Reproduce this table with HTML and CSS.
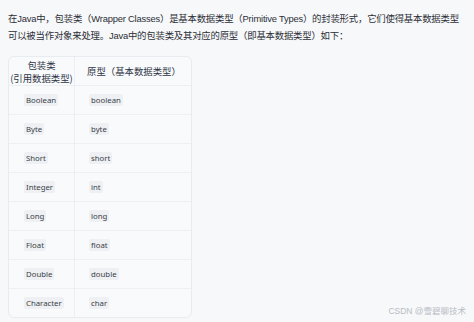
FILE: index.html
```html
<!DOCTYPE html>
<html lang="zh">
<head>
<meta charset="utf-8">
<link rel="stylesheet" href="styles.css">
</head>
<body>
<div class="page">
  <p class="intro">在Java中，包装类（Wrapper Classes）是基本数据类型（Primitive Types）的封装形式，它们使得基本数据类型可以被当作对象来处理。Java中的包装类及其对应的原型（即基本数据类型）如下：</p>
  <div class="card">
    <table class="types">
      <thead>
        <tr><th class="c1">包装类<br>(引用数据类型)</th><th class="c2">原型（基本数据类型）</th></tr>
      </thead>
      <tbody>
        <tr><td><code>Boolean</code></td><td><code>boolean</code></td></tr>
        <tr><td><code>Byte</code></td><td><code>byte</code></td></tr>
        <tr><td><code>Short</code></td><td><code>short</code></td></tr>
        <tr><td><code>Integer</code></td><td><code>int</code></td></tr>
        <tr><td><code>Long</code></td><td><code>long</code></td></tr>
        <tr><td><code>Float</code></td><td><code>float</code></td></tr>
        <tr><td><code>Double</code></td><td><code>double</code></td></tr>
        <tr><td><code>Character</code></td><td><code>char</code></td></tr>
      </tbody>
    </table>
  </div>
  <div class="watermark">CSDN @雪碧聊技术</div>
</div>
</body>
</html>
```
FILE: styles.css
```css
html, body {
  margin: 0;
  padding: 0;
}
body {
  background: #f7f8fa;
  font-family: "Liberation Sans", "Noto Sans CJK SC", sans-serif;
  color: #2b2f36;
  width: 474px;
  height: 322px;
  overflow: hidden;
}
.page {
  position: relative;
  height: 322px;
  padding: 10px 8px 0 8px;
  box-sizing: border-box;
}
.intro {
  margin: 0;
  font-size: 9.4px;
  letter-spacing: -0.2px;
  line-height: 17px;
  width: 460px;
}
.card {
  margin-top: 12px;
  width: 182px;
  border: 1px solid #e8ebf0;
  border-radius: 6px;
  background: #f9fafc;
  overflow: hidden;
}
.types {
  border-collapse: collapse;
  width: 100%;
}
.types th {
  font-weight: normal;
  font-size: 9.4px;
  line-height: 12.5px;
  color: #2e3545;
  height: 27px;
  border-bottom: 1px solid #eceef2;
  padding: 0;
  font-family: "Noto Sans CJK SC", sans-serif;
}
.types th.c1 {
  width: 65px;
  text-align: center;
  border-right: 1px solid #eceef2;
  padding-top: 1px;
}
.types th.c2 {
  text-align: left;
  padding-left: 12px;
}
.types td {
  height: 28px;
  padding: 0 0 0 15px;
  border-bottom: 1px solid #eef0f3;
  font-size: 8px;
}
.types td:first-child {
  border-right: 1px solid #eceef2;
}
.types tr:last-child td {
  border-bottom: none;
}
.types td:last-child {
  padding-left: 14px;
}
code {
  font-family: "Noto Sans", sans-serif;
  font-size: 7.8px;
  background: #eef0f3;
  padding: 1px 2px;
  border-radius: 2px;
  color: #3a3f47;
}
.watermark {
  position: absolute;
  right: 8px;
  bottom: 6px;
  font-size: 8.5px;
  color: #b8bcc3;
}
```
